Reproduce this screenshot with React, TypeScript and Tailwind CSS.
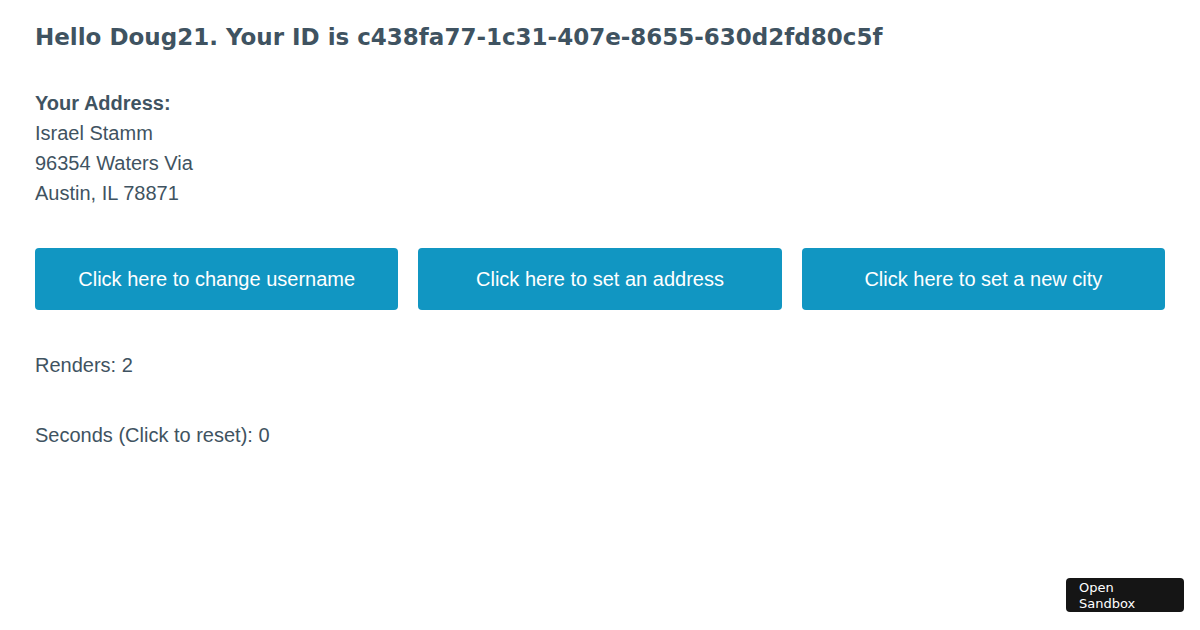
export default function App() {
  return (
    <div className="relative h-[630px] w-[1200px] bg-white text-[#3f5361]" style={{ fontFamily: '"Liberation Sans", Arial, sans-serif' }}>
      <div className="px-[35px] pt-[20px]">
        <h2 className="text-[23px] font-bold leading-[34px]" style={{ fontFamily: '"DejaVu Sans", sans-serif' }}>
          Hello Doug21. Your ID is c438fa77-1c31-407e-8655-630d2fd80c5f
        </h2>
        <div className="mt-[34px] text-[20px] leading-[30px]">
          <div className="font-bold">Your Address:</div>
          <div>Israel Stamm</div>
          <div>96354 Waters Via</div>
          <div>Austin, IL 78871</div>
        </div>
        <div className="mt-[40px] grid grid-cols-3 gap-[20px]">
          <button className="h-[62px] rounded-[4px] bg-[#1196c2] text-[20px] text-white">Click here to change username</button>
          <button className="h-[62px] rounded-[4px] bg-[#1196c2] text-[20px] text-white">Click here to set an address</button>
          <button className="h-[62px] rounded-[4px] bg-[#1196c2] text-[20px] text-white">Click here to set a new city</button>
        </div>
        <p className="mt-[40px] text-[20px] leading-[30px]">Renders: 2</p>
        <p className="mt-[40px] text-[20px] leading-[30px]">Seconds (Click to reset): 0</p>
      </div>
      <a
        className="absolute left-[1066px] top-[578px] flex h-[34px] w-[118px] flex-col justify-center rounded-[4px] bg-[#151515] pl-[13px] pt-[2px] text-[13px] leading-[16px] text-white"
        style={{ fontFamily: '"DejaVu Sans", sans-serif' }}
      >
        <span>Open</span>
        <span>Sandbox</span>
      </a>
    </div>
  );
}
